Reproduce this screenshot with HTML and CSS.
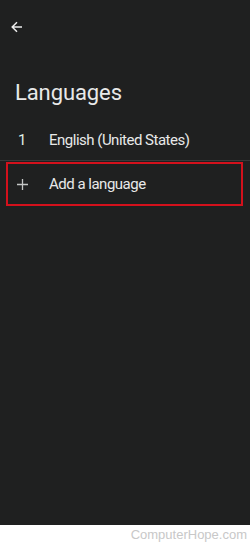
FILE: index.html
```html
<!DOCTYPE html>
<html lang="en">
<head>
    <meta charset="UTF-8">
    <meta name="viewport" content="width=device-width, initial-scale=1.0">
    <title>Languages</title>
    <link rel="stylesheet" href="styles.css">
</head>
<body id="page">
    <div id="screen">
        <div class="topbar">
            <svg class="back" width="12" height="12" viewBox="0 0 12 12">
                <path d="M11 6H1.5M6 1.2L1.2 6 6 10.8" fill="none" stroke="#ececec" stroke-width="1.5"/>
            </svg>
        </div>
        <h1 class="title">Languages</h1>
        <div class="list">
            <div class="row first">
                <span class="lead">1</span>
                <span class="label">English (United States)</span>
            </div>
            <div class="row add">
                <span class="lead">
                    <svg width="11" height="11" viewBox="0 0 11 11">
                        <path d="M5.5 0V11M0 5.5H11" stroke="#c4c6c5" stroke-width="1.3"/>
                    </svg>
                </span>
                <span class="label">Add a language</span>
            </div>
        </div>
    </div>
    <div id="footer">ComputerHope.com</div>
</body>
</html>
```

FILE: styles.css
```css
#page {
    margin: 0;
    width: 250px;
    height: 545px;
    background-color: #ffffff;
    font-family: Roboto, "Noto Sans", sans-serif;
    overflow: hidden;
}

#screen {
    height: 525px;
    background-color: #1f2020;
    color: #e8e9e9;
}
.topbar {
    height: 54px;
    display: flex;
    align-items: center;
    padding-left: 11px;
}
.title {
    margin: 25px 0 0 15px;
    font-size: 22px;
    font-weight: 400;
    line-height: 28px;
    letter-spacing: -0.1px;
}
.list {
    margin-top: 13px;
}
.row {
    display: flex;
    align-items: center;
    font-size: 15px;
    letter-spacing: -0.5px;
}
.row .lead {
    width: 44px;
    display: flex;
    justify-content: center;
    align-items: center;
}
.row .label {
    margin-left: 5px;
}
.first {
    height: 40px;
    border-bottom: 1px solid #393a3a;
}
.first .lead {
    color: #dfeee4;
}
/* red highlight box round the "add" row */
.add {
    height: 40px;
    margin: 1px 7px 0 6px;
    border: 2px solid #d3111c;
}
.add .lead {
    width: 28px;
    margin-left: 0;
}
.add .label {
    margin-left: 13px;
}

#footer {
    height: 20px;
    text-align: right;
    padding-right: 3px;
    font-family: "Liberation Sans", Arial, sans-serif;
    font-size: 13px;
    line-height: 20px;
    color: #c8c8c8;
}
```
